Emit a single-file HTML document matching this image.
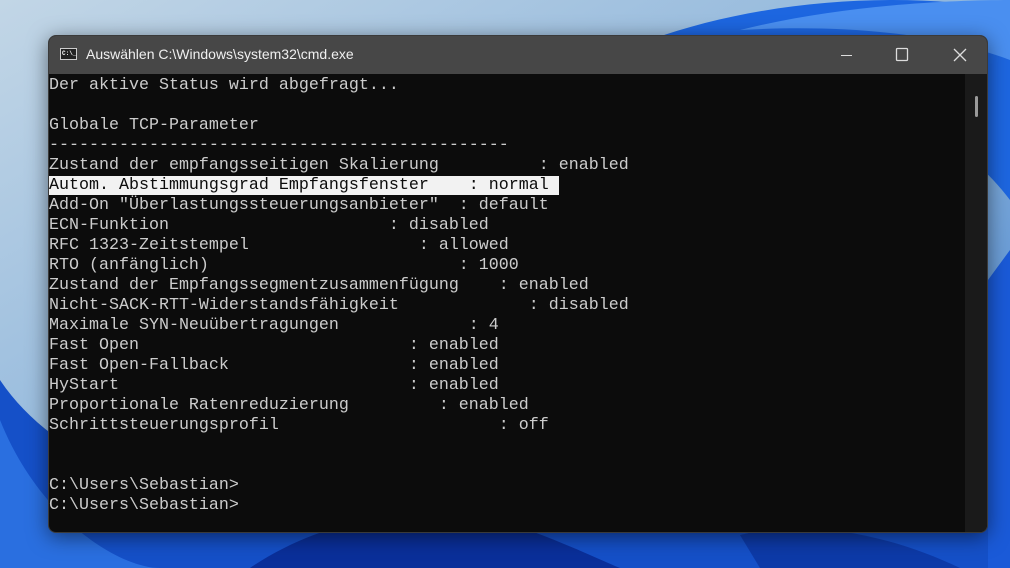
<!DOCTYPE html>
<html><head><meta charset="utf-8"><style>
html,body{margin:0;padding:0;width:1010px;height:568px;overflow:hidden;background:#8fb4d6;}
.bg{position:absolute;left:0;top:0;}
.win{position:absolute;left:48px;top:35px;width:940px;height:498px;background:#0c0c0c;border-radius:8px;overflow:hidden;box-shadow:0 4px 20px rgba(0,0,0,.5);border:1px solid #3a3a3a;box-sizing:border-box;}
.title{position:absolute;left:0;top:0;width:100%;height:38px;background:#474747;}
.ttext{position:absolute;left:37px;top:10px;font:14px "Liberation Sans",sans-serif;color:#f0f0f0;}
.icon{position:absolute;left:11px;top:12px;width:17px;height:12px;background:#222;border:1px solid #ccc;box-sizing:border-box;font:bold 6px "Liberation Mono",monospace;color:#fff;line-height:9px;padding-left:1px;}
.ctl{position:absolute;top:0;height:38px;color:#eee;}
.sb{position:absolute;right:0;top:38px;width:22px;bottom:0;background:#1a1a1a;}
.thumb{position:absolute;left:10px;top:22px;width:3px;height:21px;background:#9a9a9a;border-radius:2px;}
pre{position:absolute;left:0;top:40px;margin:0;font-family:"Liberation Mono",monospace;font-size:16.67px;line-height:20px;color:#cccccc;}
.hl{background:#f2f2f2;color:#0c0c0c;}
</style></head><body>
<svg class="bg" width="1010" height="568" viewBox="0 0 1010 568">
<defs>
<linearGradient id="g0" x1="0" y1="0" x2="1" y2="1"><stop offset="0" stop-color="#c2d6e6"/><stop offset=".5" stop-color="#8fb6dc"/><stop offset="1" stop-color="#3f7fd0"/></linearGradient>
</defs>
<rect width="1010" height="568" fill="url(#g0)"/>
<path d="M650 40 C760 0 900 -10 1010 10 L1010 200 C950 120 820 60 650 40Z" fill="#1d66e0"/>
<path d="M740 30 C840 5 950 0 1010 0 L1010 60 C930 30 830 25 740 30Z" fill="#4a8ff0"/>
<path d="M0 380 C60 470 200 520 420 530 L1010 520 L1010 568 L0 568Z" fill="#1550c8"/>
<path d="M0 420 C40 520 120 568 160 568 L0 568Z" fill="#2a6fe0"/>
<path d="M250 568 C320 520 420 500 500 520 C560 540 600 560 620 568Z" fill="#0a2f9a"/>
<path d="M740 535 C800 520 880 530 960 568 L760 568Z" fill="#0d3aa8"/>
<path d="M988 280 L1010 250 L1010 568 L988 568Z" fill="#1a5ad8"/>
</svg>
<div class="win">
<div class="title">
<div class="icon">C:\_</div>
<div class="ttext">Auswählen C:\Windows\system32\cmd.exe</div>
<svg class="ctl" style="left:780px" width="160" height="38"><line x1="12" y1="19.5" x2="23" y2="19.5" stroke="#ddd" stroke-width="1"/><rect x="67.5" y="12.5" width="11" height="12" fill="none" stroke="#ddd" stroke-width="1.3" rx="1"/><path d="M125 13 L137 25 M137 13 L125 25" stroke="#ddd" stroke-width="1.3"/></svg>
</div>
<div class="sb"><div class="thumb"></div></div>
<pre>Der aktive Status wird abgefragt...

Globale TCP-Parameter
----------------------------------------------
Zustand der empfangsseitigen Skalierung          : enabled
<span class="hl">Autom. Abstimmungsgrad Empfangsfenster    : normal </span>
Add-On "Überlastungssteuerungsanbieter"  : default
ECN-Funktion                      : disabled
RFC 1323-Zeitstempel                 : allowed
RTO (anfänglich)                         : 1000
Zustand der Empfangssegmentzusammenfügung    : enabled
Nicht-SACK-RTT-Widerstandsfähigkeit             : disabled
Maximale SYN-Neuübertragungen             : 4
Fast Open                           : enabled
Fast Open-Fallback                  : enabled
HyStart                             : enabled
Proportionale Ratenreduzierung         : enabled
Schrittsteuerungsprofil                      : off


C:\Users\Sebastian>
C:\Users\Sebastian></pre>
</div>
</body></html>
